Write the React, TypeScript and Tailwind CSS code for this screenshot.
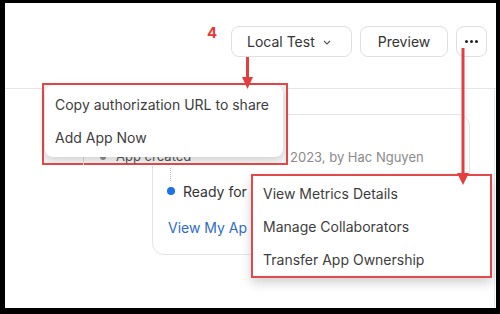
import React from 'react';

const appMenu = ['Copy authorization URL to share', 'Add App Now'];
const moreMenu = ['View Metrics Details', 'Manage Collaborators', 'Transfer App Ownership'];

const MenuItem: React.FC<{ label: string }> = ({ label }) => (
  <div className="h-[33px] flex items-center pl-[10px] text-[14px] text-[#3d3d3d] whitespace-nowrap">
    {label}
  </div>
);

const App: React.FC = () => {
  return (
    <div className="relative w-[500px] h-[314px] bg-black pt-[3px] pl-[5px] pr-[4px] pb-[6px] font-['Inter','Noto_Sans',sans-serif] overflow-hidden">
      <div className="h-full bg-white flex flex-col">
        {/* header */}
        <header className="h-[86px] shrink-0 border-b border-[#e6e6e6] flex justify-end items-start gap-2 pt-[23px] pr-[9px]">
          <button className="w-[121px] h-[31px] rounded-lg border border-[#dfdfdf] flex items-center gap-2 pl-[15px] text-[14px] text-[#333]">
            Local Test
            <svg width="8" height="5" viewBox="0 0 8 5" className="mt-[1px]">
              <path d="M1 1 L4 4 L7 1" fill="none" stroke="#555" strokeWidth="1.1" />
            </svg>
          </button>
          <button className="w-[88px] h-[31px] rounded-lg border border-[#dfdfdf] flex items-center justify-center text-[14px] text-[#333]">
            Preview
          </button>
          <button className="w-[31px] h-[31px] rounded-lg border border-[#dfdfdf] flex items-center justify-center gap-[2px]">
            <span className="size-[3px] rounded-full bg-[#222]" />
            <span className="size-[3px] rounded-full bg-[#222]" />
            <span className="size-[3px] rounded-full bg-[#222]" />
          </button>
        </header>

        {/* content */}
        <div className="flex-1 mr-[1px] border-r border-[#e8e8e8]">
          <div className="ml-[147px] mt-[25px] w-[318px] h-[141px] rounded-xl border border-[#e4e4e4] pl-[14px] pt-[33px]">
            <div className="h-[20px] flex items-center gap-2">
              <span className="size-2 rounded-full bg-[#9a9a9a]" />
              <span className="w-[99px]" />
              <span className="text-[13px] text-[#8a8a8a] whitespace-nowrap">2023, by Hac Nguyen</span>
            </div>
            <div className="ml-[3px] h-[13px] border-l border-dotted border-[#bdbdbd]" />
            <div className="h-[20px] flex items-center gap-2">
              <span className="size-2 rounded-full bg-[#1a73e8]" />
              <span className="w-[67px] overflow-hidden whitespace-nowrap text-[14px] text-[#333]">Ready for</span>
            </div>
            <div className="mt-[16px] ml-[1px] w-[82px] overflow-hidden whitespace-nowrap h-[20px] flex items-center text-[14px] text-[#2f6bc7]">
              View My Ap
            </div>
          </div>
        </div>
      </div>

      {/* annotation: step number */}
      <span className="absolute left-[207px] top-[25px] text-[15px] leading-none font-bold text-[#e53935]">4</span>

      {/* pasted dropdown: Local Test */}
      <div className="absolute left-[42px] top-[83px] w-[246px] h-[82px] border-2 border-[#e04a4a] bg-[#f3f3f3]">
        <div className="absolute left-[39px] top-[72px] h-[8px] border-l border-[#d6d6d6]" />
        <div className="absolute left-[56px] top-[72px] h-[8px] overflow-hidden">
          <div className="-mt-[8px] h-[16px] flex items-center gap-[10px]">
            <span className="size-[6px] rounded-full bg-[#8d8d8d]" />
            <span className="text-[13px] text-[#555]">App created</span>
          </div>
        </div>
        <div className="absolute left-[1px] top-0 w-[238px] h-[72px] rounded-lg bg-white shadow-[0_2px_8px_rgba(0,0,0,0.16)] py-[3px]">
          {appMenu.map((m) => (
            <MenuItem key={m} label={m} />
          ))}
        </div>
      </div>

      {/* pasted dropdown: more */}
      <div className="absolute left-[251px] top-[174px] w-[241px] h-[104px] border-2 border-[#e04a4a] bg-white shadow-[0_5px_10px_rgba(0,0,0,0.18)] pt-[1px]">
        {moreMenu.map((m) => (
          <MenuItem key={m} label={m} />
        ))}
      </div>

      {/* annotation arrows */}
      <svg className="absolute inset-0 pointer-events-none" width="500" height="314" viewBox="0 0 500 314">
        <line x1="247.5" y1="57" x2="247.5" y2="80" stroke="#e53e3e" strokeWidth="3" />
        <polygon points="242,77 253,77 247.5,89" fill="#e53e3e" />
        <line x1="463" y1="48" x2="463" y2="176" stroke="#e53e3e" strokeWidth="3" />
        <polygon points="457,173 469,173 463,185" fill="#e53e3e" />
      </svg>
    </div>
  );
};

export default App;
